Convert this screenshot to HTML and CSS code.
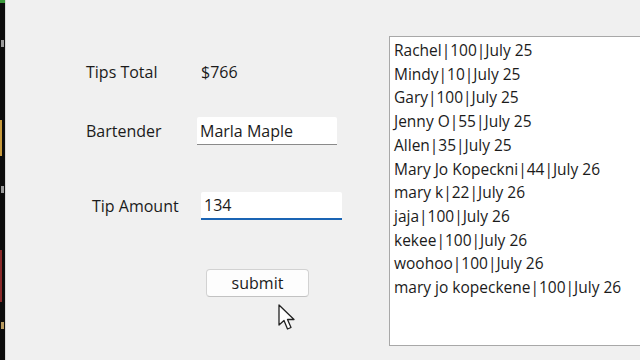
FILE: index.html
```html
<!DOCTYPE html>
<html lang="en">
<head>
    <meta charset="UTF-8">
    <meta name="viewport" content="width=device-width, initial-scale=1.0">
    <title>Tips</title>
    <link rel="stylesheet" href="styles.css">
</head>
<body>
    <div class="edge">
        <span class="bit green"></span>
        <span class="bit mark m1"></span>
        <span class="bit yellow"></span>
        <span class="bit mark m2"></span>
        <span class="bit red"></span>
        <span class="bit mark m3"></span>
    </div>

    <div class="window">
        <div class="form">
            <div class="row row-total">
                <span class="label">Tips Total</span>
                <span class="value">$766</span>
            </div>
            <div class="row row-bartender">
                <span class="label">Bartender</span>
                <input type="text" class="box" value="Marla Maple">
            </div>
            <div class="row row-amount">
                <span class="label">Tip Amount</span>
                <input type="text" class="box focused" value="134">
            </div>
            <div class="row row-submit">
                <button class="submit">submit</button>
            </div>
        </div>

        <div class="list">
            <div>Rachel|100|July 25</div>
            <div>Mindy|10|July 25</div>
            <div>Gary|100|July 25</div>
            <div>Jenny O|55|July 25</div>
            <div>Allen|35|July 25</div>
            <div>Mary Jo Kopeckni|44|July 26</div>
            <div>mary k|22|July 26</div>
            <div>jaja|100|July 26</div>
            <div>kekee|100|July 26</div>
            <div>woohoo|100|July 26</div>
            <div>mary jo kopeckene|100|July 26</div>
        </div>

        <!-- puntero del raton -->
        <svg class="cursor" width="20" height="28" viewBox="0 0 20 28">
            <path d="M1 1 L1 21 L6 16.5 L9.5 25 L13 23.5 L9.5 15.5 L16 15.5 Z" fill="#fff" stroke="#222" stroke-width="1.3" stroke-linejoin="round"/>
        </svg>
    </div>
</body>
</html>
```

FILE: styles.css
```css
/* Ventana de propinas */
body {
    margin: 0;
    width: 640px;
    height: 360px;
    overflow: hidden;
    display: flex;
    font-family: "Open Sans", "Noto Sans", Arial, sans-serif;
    font-size: 16px;
    color: #1b1b1b;
    background: linear-gradient(to right, #0c0c0c 0 5px, #d9d9d9 5px 6px, #f0f0f0 6px);
}
.edge {
    position: relative;
    flex: 0 0 6px;
    height: 360px;
    box-sizing: border-box;
    background-color: #0c0c0c;
    border-right: 1px solid #d9d9d9;
}
.bit {
    position: absolute;
    left: 0;
    width: 2px;
}
.green { top: 0; height: 3px; width: 5px; background-color: #3c9a3c; }
.yellow { top: 120px; height: 36px; background-color: #c79a3c; }
.red { top: 250px; height: 52px; background-color: #8a2a2a; }
.mark {
    left: 1px;
    width: 3px;
    height: 7px;
    background-color: #9a9a9a;
}
.m1 { top: 40px; }
.m2 { top: 186px; }
.m3 { top: 322px; background-color: #b89a60; }

.window {
    position: relative;
    flex: 1;
    display: flex;
    min-width: 0;
    background-color: #f0f0f0;
}
.form {
    flex-shrink: 0;
    width: 383px;
    padding-top: 58px;
    padding-left: 80px;
    box-sizing: border-box;
}
.row {
    display: flex;
    align-items: center;
    height: 28px;
}
.label {
    width: 111px;
}
.value {
    margin-left: 4px;
}
.row-bartender { margin-top: 31px; }
.row-amount {
    margin-top: 47px;
    padding-left: 6px;
}
.row-amount .label { width: 109px; }
.row-submit {
    margin-top: 49px;
    padding-left: 120px;
}
.box {
    width: 140px;
    height: 28px;
    padding: 0 3px;
    box-sizing: border-box;
    border: none;
    border-bottom: 1px solid #8a8a8a;
    border-radius: 2px 2px 0 0;
    background-color: #fff;
    font-family: inherit;
    font-size: 16px;
    color: #1b1b1b;
    outline: none;
}
.focused {
    width: 141px;
    border-bottom: 2px solid #1a64b4;
}
.submit {
    width: 103px;
    height: 28px;
    border: 1px solid #d2d2d2;
    border-bottom-color: #c2c2c2;
    border-radius: 4px;
    background-color: #fdfdfd;
    font-family: inherit;
    font-size: 16px;
    color: #1b1b1b;
}
.list {
    flex-shrink: 0;
    margin-top: 36px;
    width: 260px;
    height: 310px;
    padding: 2px 4px;
    box-sizing: border-box;
    border: 1px solid #a8a8a8;
    border-right: none;
    background-color: #fff;
    line-height: 23.7px;
    font-size: 15.5px;
    white-space: nowrap;
}
.cursor {
    position: absolute;
    left: 272px;
    top: 304px;
}
```
